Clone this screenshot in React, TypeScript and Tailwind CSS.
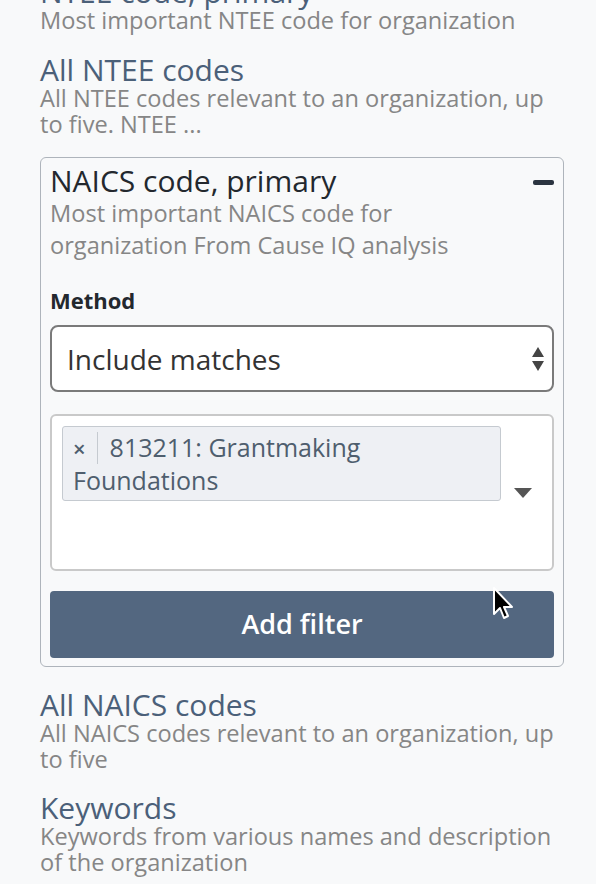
import * as React from "react";

const font = { fontFamily: '"Open Sans", "Noto Sans", sans-serif' };

function Field({ title, desc }: { title: string; desc: string }) {
  return (
    <div>
      <div className="text-[30px] leading-[30px] text-[#4b6079]">{title}</div>
      <div className="text-[23.6px] leading-[26px] text-[#868686]">{desc}</div>
    </div>
  );
}

export default function App() {
  return (
    <div className="relative min-h-[884px] overflow-hidden bg-[#f8f9fa]" style={font}>
      <div className="mt-[-23px] pl-[40px] pr-[32px] flex flex-col">
        <Field title="NTEE code, primary" desc="Most important NTEE code for organization" />
        <div className="mt-[22px]">
          <Field title="All NTEE codes" desc="All NTEE codes relevant to an organization, up to five. NTEE ..." />
        </div>

        {/* Expanded filter panel */}
        <div className="mt-[20px] rounded-[6px] border border-[#aeb4bb] bg-[#f8f9fa] px-[9px] pt-[7px] pb-[8px]">
          <div className="flex items-start justify-between">
            <div className="text-[30px] leading-[32px] text-[#23282e]">NAICS code, primary</div>
            <div className="mt-[15px] h-[5px] w-[21px] rounded-[2px] bg-[#2b3440]" />
          </div>
          <div className="text-[23.6px] leading-[32px] text-[#868686]">
            Most important NAICS code for
            <br />
            organization From Cause IQ analysis
          </div>

          <div className="mt-[24px] text-[22px] leading-[30px] font-bold text-[#23282e]">Method</div>

          <div className="mt-[10px] flex h-[67px] items-center justify-between rounded-[8px] border-2 border-[#7a7a7a] bg-white pl-[15px] pr-[7px]">
            <span className="text-[28px] text-[#333]">Include matches</span>
            <svg width="14" height="26" viewBox="0 0 14 26">
              <path d="M7 1 L13 11 L1 11 Z" fill="#444" />
              <path d="M1 15 L13 15 L7 25 Z" fill="#444" />
            </svg>
          </div>

          <div className="mt-[22px] flex h-[157px] items-start rounded-[6px] border-2 border-[#c9c9c9] bg-white pl-[10px] pt-[10px] pr-[20px]">
            <div className="w-[439px] rounded-[3px] border border-[#c5cad0] bg-[#eef0f4] px-[10px] py-[4px] text-[25px] leading-[32px] text-[#4f5e6e]">
              <span className="mr-[12px] inline-block border-r border-[#c5cad0] pr-[11px] text-[22px] font-semibold">×</span>
              813211: Grantmaking Foundations
            </div>
            <svg className="ml-auto mt-[62px]" width="18" height="10" viewBox="0 0 18 10">
              <path d="M0 0 L18 0 L9 10 Z" fill="#555" />
            </svg>
          </div>

          <button className="mt-[20px] flex h-[67px] w-full items-center justify-center rounded-[4px] bg-[#536780] text-[27px] font-semibold text-white">
            Add filter
          </button>
        </div>

        <div className="mt-[23px]">
          <Field title="All NAICS codes" desc="All NAICS codes relevant to an organization, up to five" />
        </div>
        <div className="mt-[21px]">
          <Field title="Keywords" desc="Keywords from various names and description of the organization" />
        </div>
      </div>

      {/* mouse cursor */}
      <svg className="absolute left-[492px] top-[586px]" width="24" height="36" viewBox="0 0 24 36">
        <path d="M2 2 L2 28 L8 22 L12 32 L16 30 L12 21 L20 21 Z" fill="#000" stroke="#fff" strokeWidth="2" strokeLinejoin="round" />
      </svg>
    </div>
  );
}
